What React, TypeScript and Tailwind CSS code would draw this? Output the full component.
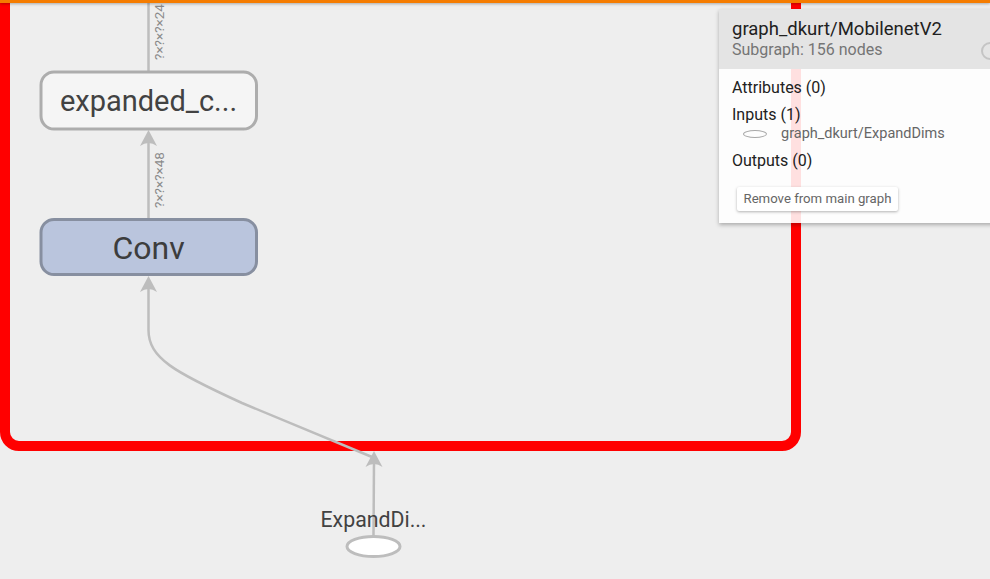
import React from "react";

const EDGE = "#bdbdbd";

function Arrow({ x, y }: { x: number; y: number }) {
  return (
    <path
      d={`M${x} ${y} L${x + 8.5} ${y + 16} Q${x} ${y + 10} ${x - 8.5} ${y + 16} Z`}
      fill={EDGE}
    />
  );
}

function GraphCanvas() {
  return (
    <svg
      className="absolute inset-0"
      width={990}
      height={576}
      viewBox="0 3 990 576"
      style={{ fontFamily: "Roboto, 'Noto Sans', sans-serif" }}
    >
      {/* group frame */}
      <rect x={5} y={-100} width={791} height={546} rx={14} fill="none" stroke="#ff0000" strokeWidth={10} />

      {/* edges */}
      <line x1={148.5} y1={0} x2={148.5} y2={72} stroke={EDGE} strokeWidth={2.5} />
      <line x1={148.5} y1={142} x2={148.5} y2={218} stroke={EDGE} strokeWidth={2.5} />
      <Arrow x={148.5} y={130} />
      <path
        d="M148.5 288 V330 C148.5 358 174 372 242 403 L372 457"
        fill="none"
        stroke={EDGE}
        strokeWidth={2.5}
      />
      <Arrow x={148.5} y={276} />
      <line x1={374} y1={462} x2={373.5} y2={537} stroke={EDGE} strokeWidth={2.5} />
      <Arrow x={374} y={451} />

      {/* edge labels */}
      <text transform="translate(163.5 60) rotate(-90)" fontSize={13.5} fill="#8a8a8a">
        ?×?×?×24
      </text>
      <text transform="translate(163.5 208) rotate(-90)" fontSize={13.5} fill="#8a8a8a">
        ?×?×?×48
      </text>

      {/* nodes */}
      <rect x={41} y={72} width={215.5} height={57} rx={13} fill="#f5f5f5" stroke="#adadad" strokeWidth={3} />
      <text x={148.5} y={111} textAnchor="middle" fontSize={29} fill="#424242">
        expanded_c...
      </text>

      <rect x={41} y={219.5} width={215.5} height={55} rx={13} fill="#bac5dd" stroke="#878fa0" strokeWidth={3} />
      <text x={148.5} y={259} textAnchor="middle" fontSize={32} fill="#3d3d3d">
        Conv
      </text>

      <text x={373.5} y={526.5} textAnchor="middle" fontSize={21.3} fill="#424242">
        ExpandDi...
      </text>
      <ellipse cx={373.5} cy={546.5} rx={26.5} ry={10} fill="#ffffff" stroke="#bdbdbd" strokeWidth={3} />
    </svg>
  );
}

function InfoPanel() {
  return (
    <div className="absolute left-[719px] top-[6px] w-[290px] shadow-[0_2px_4px_rgba(0,0,0,0.28)]">
      <div className="relative h-[60px] bg-[#e4e4e4] pl-[13px] pt-[9px]">
        <div className="text-[18.5px] leading-[22px] text-[#212121]">graph_dkurt/MobilenetV2</div>
        <div className="mt-[1px] text-[16px] leading-[18px] text-[#757575]">Subgraph: 156 nodes</div>
        <div className="absolute left-[262px] top-[33px] h-[18px] w-[20px] rounded-full border-2 border-[#c4c4c4]" />
      </div>
      <div className="bg-white/[0.88] pl-[13px] pt-[9px] pb-[12px]">
        <div className="text-[16px] leading-[20px] text-[#212121]">Attributes (0)</div>
        <div className="mt-[6.5px] text-[16px] leading-[20px] text-[#212121]">Inputs (1)</div>
        <div className="flex items-center text-[14.5px] leading-[18px] text-[#666666]">
          <div className="ml-[11px] h-[8px] w-[24px] rounded-[50%] border border-[#a8a8a8]" />
          <span className="ml-[14px]">graph_dkurt/ExpandDims</span>
        </div>
        <div className="mt-[8.5px] text-[16px] leading-[20px] text-[#212121]">Outputs (0)</div>
        <div className="mt-[15.5px] flex">
          <div className="ml-[5px] h-[24px] rounded-[2px] bg-white px-[6.5px] text-[13.2px] leading-[24px] text-[#666666] shadow-[0_1px_3px_rgba(0,0,0,0.3)]">
            Remove from main graph
          </div>
        </div>
      </div>
    </div>
  );
}

export default function App() {
  return (
    <div
      className="flex h-[579px] w-[990px] flex-col overflow-hidden bg-[#eeeeee]"
      style={{ fontFamily: "Roboto, 'Noto Sans', sans-serif" }}
    >
      <div className="relative z-10 h-[3px] shrink-0 bg-[#f57c00] shadow-[0_1px_3px_rgba(0,0,0,0.3)]" />
      <div className="relative flex-1">
        <GraphCanvas />
        <InfoPanel />
      </div>
    </div>
  );
}
